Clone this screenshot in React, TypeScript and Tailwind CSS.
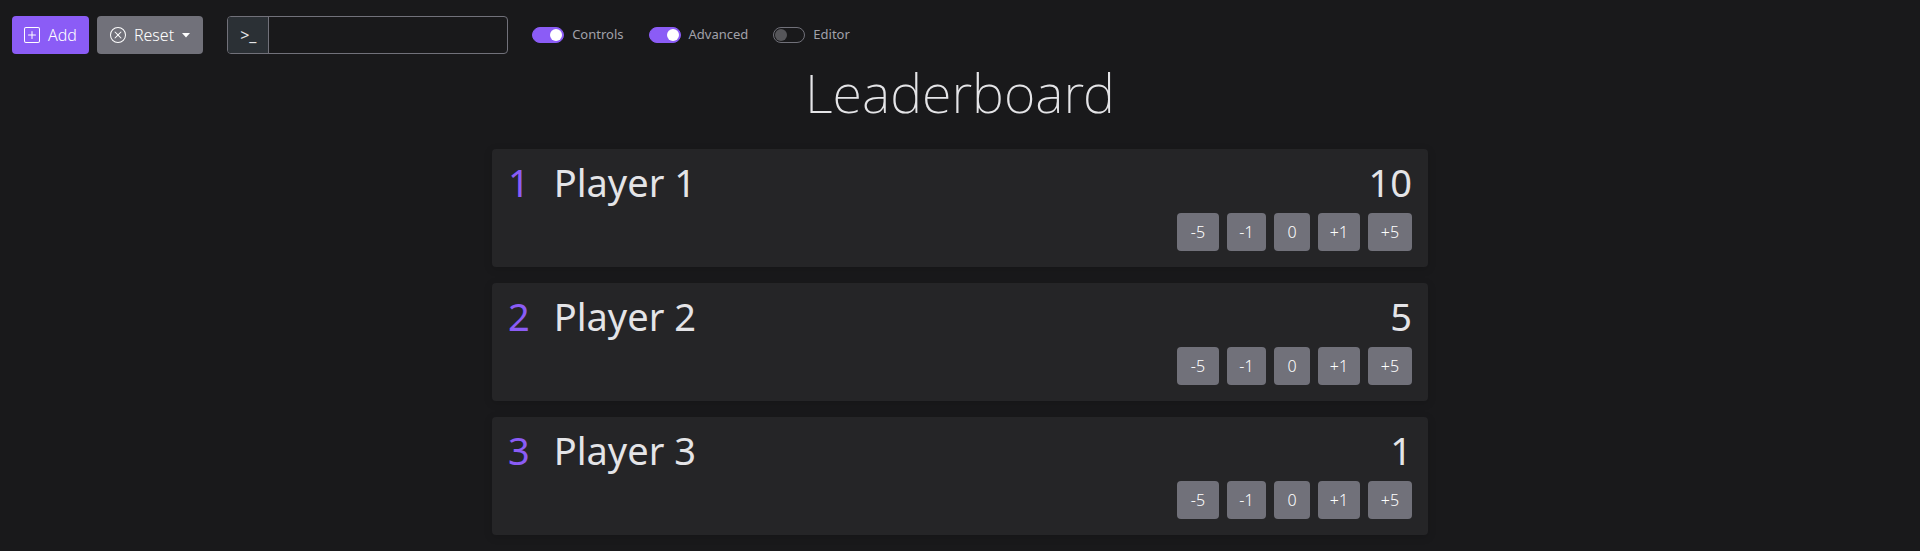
import { useState } from "react";
import { BsPlusSquare, BsXCircle } from "react-icons/bs";

type Player = { id: number; name: string; score: number };

const initialPlayers: Player[] = [
  { id: 1, name: "Player 1", score: 10 },
  { id: 2, name: "Player 2", score: 5 },
  { id: 3, name: "Player 3", score: 1 },
];

const steps = [
  { label: "-5", delta: -5, width: "w-[42px]" },
  { label: "-1", delta: -1, width: "w-[39px]" },
  { label: "0", delta: 0, width: "w-9" },
  { label: "+1", delta: 1, width: "w-[42px]" },
  { label: "+5", delta: 5, width: "w-11" },
];

export default function App() {
  const [players, setPlayers] = useState(initialPlayers);
  const [controls, setControls] = useState(true);
  const [advanced, setAdvanced] = useState(true);
  const [editor, setEditor] = useState(false);

  const ranked = [...players].sort((a, b) => b.score - a.score);

  function addPlayer() {
    const id = players.length + 1;
    setPlayers([...players, { id, name: `Player ${id}`, score: 0 }]);
  }

  function changeScore(id: number, delta: number) {
    setPlayers(
      players.map((p) =>
        p.id === id ? { ...p, score: delta === 0 ? 0 : p.score + delta } : p,
      ),
    );
  }

  return (
    <div className="min-h-screen bg-[#19191b] font-['Noto_Sans',sans-serif] text-base text-[#e4e4e7]">
      <header className="flex flex-wrap items-center gap-6 px-3 pt-4">
        <div className="flex gap-2">
          <button
            type="button"
            onClick={addPlayer}
            className="flex h-[38px] items-center gap-2 rounded-sm bg-[#8b5cf6] px-3 font-light text-white"
          >
            <BsPlusSquare aria-hidden="true" />
            Add
          </button>
          <button
            type="button"
            onClick={() => setPlayers(players.map((p) => ({ ...p, score: 0 })))}
            className="flex h-[38px] items-center gap-2 rounded-sm bg-[#71717a] px-[13px] font-light text-white"
          >
            <BsXCircle aria-hidden="true" />
            Reset
            <svg width="8" height="5" viewBox="0 0 8 5" aria-hidden="true">
              <path d="M0 0h8L4 4.5z" fill="currentColor" />
            </svg>
          </button>
        </div>

        <div className="flex h-[38px] w-[281px] overflow-hidden rounded-sm border border-[#71717a]">
          <label
            htmlFor="command"
            className="flex items-center border-r border-[#71717a] bg-[#2b3035] px-3"
          >
            &gt;_
          </label>
          <input
            id="command"
            type="text"
            className="min-w-0 flex-1 bg-transparent px-3 outline-none"
          />
        </div>

        <div className="flex gap-[25px]">
          <Toggle label="Controls" checked={controls} onChange={setControls} />
          <Toggle label="Advanced" checked={advanced} onChange={setAdvanced} />
          <Toggle label="Editor" checked={editor} onChange={setEditor} />
        </div>
      </header>

      <main className="mx-auto max-w-[960px] px-3">
        <h1 className="mb-[18px] text-center text-[54px] leading-[77px] font-extralight">
          Leaderboard
        </h1>
        <ol className="flex flex-col gap-4">
          {ranked.map((player, i) => (
            <PlayerCard
              key={player.id}
              rank={i + 1}
              player={player}
              showControls={controls}
              onChange={changeScore}
            />
          ))}
        </ol>
      </main>
    </div>
  );
}

function PlayerCard({
  rank,
  player,
  showControls,
  onChange,
}: {
  rank: number;
  player: Player;
  showControls: boolean;
  onChange: (id: number, delta: number) => void;
}) {
  return (
    <li className="rounded-sm bg-[#252527] p-4 shadow-[0_2px_8px_rgba(0,0,0,0.15)]">
      <div className="mb-[14px] flex text-[38px] leading-[34px]">
        <span className="mr-6 text-[#8b5cf6]">{rank}</span>
        <span className="flex-1">{player.name}</span>
        <span>{player.score}</span>
      </div>
      {showControls && (
        <div className="flex justify-end gap-2">
          {steps.map((s) => (
            <button
              key={s.label}
              type="button"
              onClick={() => onChange(player.id, s.delta)}
              className={`h-[38px] rounded-sm bg-[#71717a] font-light text-white ${s.width}`}
            >
              {s.label}
            </button>
          ))}
        </div>
      )}
    </li>
  );
}

function Toggle({
  label,
  checked,
  onChange,
}: {
  label: string;
  checked: boolean;
  onChange: (value: boolean) => void;
}) {
  return (
    <label className="flex items-center gap-2 text-[13px] text-[#a1a1aa]">
      <input
        type="checkbox"
        role="switch"
        checked={checked}
        onChange={(e) => onChange(e.target.checked)}
        className="h-4 w-8 appearance-none rounded-full border border-[#71717a] p-px before:block before:size-3 before:rounded-full before:bg-[#56565a] checked:border-[#8b5cf6] checked:bg-[#8b5cf6] checked:before:ml-4 checked:before:bg-white"
      />
      {label}
    </label>
  );
}
